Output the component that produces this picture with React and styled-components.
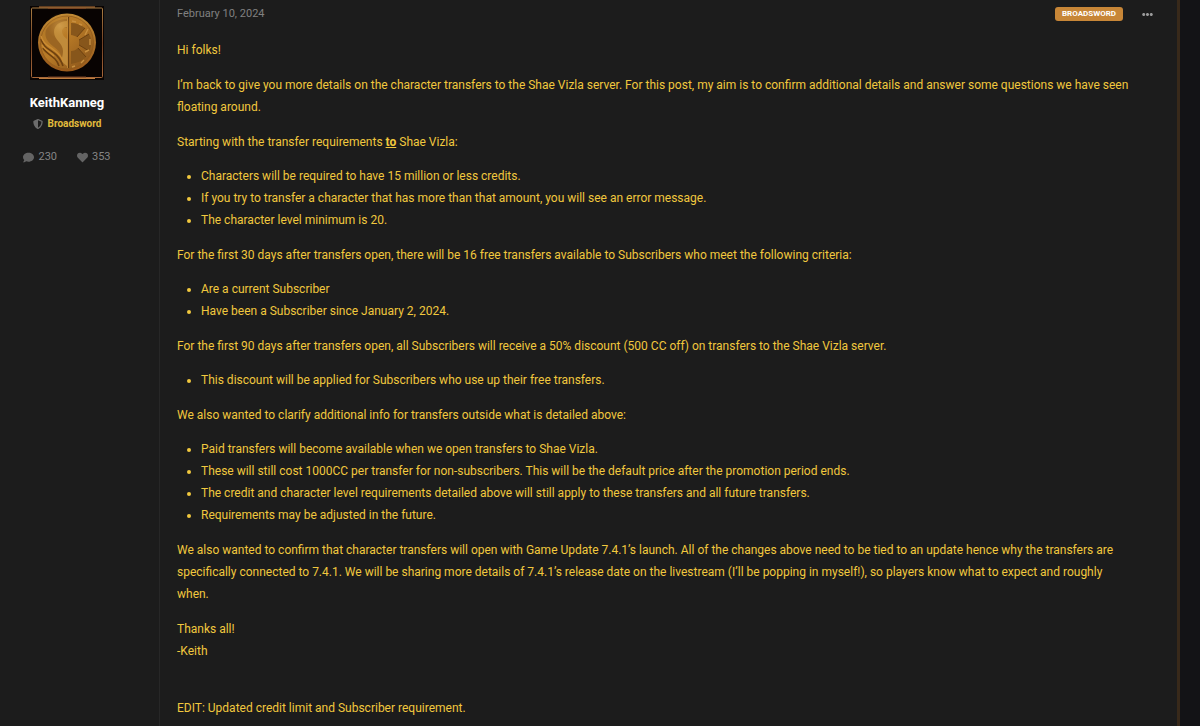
import React from "react";
import styled, { createGlobalStyle } from "styled-components";
import { FaComment, FaHeart, FaShieldAlt, FaEllipsisH } from "react-icons/fa";

const GlobalStyle = createGlobalStyle`
  *, *::before, *::after { box-sizing: border-box; }
  body {
    margin: 0;
    background: #131316;
    color: #f1c83e;
    font-family: Roboto, sans-serif;
    font-size: 12px;
    line-height: 22px;
  }
`;

const Post = styled.article`
  display: flex;
  min-height: 100vh;
  margin-right: 20px;
  background: #1c1c1c;
  border-right: 3px solid #38291a;
`;

const Author = styled.aside`
  flex: 0 0 160px;
  display: flex;
  flex-direction: column;
  align-items: center;
  padding: 6px 25px 0 0;
  border-right: 1px solid #272727;
`;

const AvatarLink = styled.a`
  display: block;
  height: 74px;
  margin-bottom: 12px;
`;

const AuthorName = styled.a`
  color: #ffffff;
  font-weight: 700;
  font-size: 13px;
  text-decoration: none;
`;

const Group = styled.div`
  display: flex;
  align-items: center;
  gap: 5px;
  height: 20px;
  color: #e2bb3c;
  font-size: 10px;
  font-weight: 700;
  svg { color: #6c6c6c; }
`;

const Stats = styled.ul`
  display: flex;
  gap: 20px;
  margin: 12px 0 0;
  padding: 0;
  list-style: none;
  color: #858585;
  font-size: 11px;
`;

const Stat = styled.li`
  display: flex;
  align-items: center;
  gap: 4px;
  svg { color: #646464; }
`;

const Main = styled.div`
  flex: 1;
  min-width: 0;
  padding: 3px 24px 0 17px;
`;

const Header = styled.header`
  display: flex;
  align-items: center;
  height: 22px;
`;

const PostDate = styled.a`
  margin-right: auto;
  color: #808080;
  font-size: 11px;
  text-decoration: none;
`;

const Badge = styled.strong`
  padding: 0 7px;
  border-radius: 3px;
  background: #c78637;
  color: #fff;
  font-size: 8px;
  line-height: 14px;
`;

const MenuButton = styled.button`
  display: flex;
  margin-left: 19px;
  padding: 0;
  border: 0;
  background: none;
  color: #9a9a9a;
`;

const Body = styled.div`
  padding: 1px 18px 8px 0;
  p { margin: 13px 0 0; }
  ul { margin: 12px 0 0; padding-left: 24px; }
`;

const EditNote = styled.p`
  padding-top: 22px;
`;

function Avatar() {
  return (
    <svg width="74" height="74" viewBox="0 0 74 74" role="img" aria-label="KeithKanneg">
      <defs>
        <linearGradient id="coin" x1="0" y1="0" x2="1" y2="1">
          <stop offset="0" stopColor="#b07827" />
          <stop offset=".45" stopColor="#b87a26" />
          <stop offset="1" stopColor="#84501a" />
        </linearGradient>
        <linearGradient id="rim" x1="0" y1="0" x2="0" y2="1">
          <stop offset="0" stopColor="#c08a35" />
          <stop offset="1" stopColor="#99591a" />
        </linearGradient>
        <linearGradient id="frame" x1="0" y1="0" x2="0" y2="1">
          <stop offset="0" stopColor="#a97c42" />
          <stop offset=".5" stopColor="#704023" />
          <stop offset="1" stopColor="#a8683a" />
        </linearGradient>
        <radialGradient id="glow">
          <stop offset="0" stopColor="#dcaa58" />
          <stop offset="1" stopColor="#c58b30" stopOpacity="0" />
        </radialGradient>
      </defs>
      <rect width="74" height="74" fill="#080302" />
      <rect x="1.5" y="2" width="71" height="69.5" rx="1" fill="none" stroke="url(#frame)" />
      <path d="M9 1h56M9 72.5h56" stroke="#bd7d3e" strokeWidth="1.2" />
      <path d="M18 2.5h38M18 71h38" stroke="#754322" />
      <circle cx="37" cy="36.5" r="29" fill="url(#rim)" />
      <circle cx="37" cy="36.5" r="26.5" fill="url(#coin)" stroke="#91591b" strokeWidth=".8" />
      <path d="M37 13c-9 0-17 4-21 11-2 6 1 12 8 17 4 3 7 6 8 11l5 6V47c-4-7-9-11-10-18 0-5 3-8 10-7Z" fill="#9b6522" />
      <path d="M37 15c-8 0-13 5-13 11 0 8 9 11 9 19 0 5-2 8-1 11l5 4V33c-3-2-5-5-5-8 0-2 2-4 5-4Z" fill="#c08b3a" />
      <path d="M11 33c2 8 8 10 13 14 4 3 7 7 9 13M13 42c3 5 8 7 12 11 2 2 3 4 4 7" fill="none" stroke="#6e400f" strokeWidth="1.6" />
      <path d="M11 30c2 8 8 10 13 14 4 3 7 6 9 11M12 39c3 5 8 7 12 11" fill="none" stroke="#cb8c34" strokeWidth="1.3" />
      <path d="M41 17c6 0 10 2 14 5l-8 9c-2-1-4-2-6-2ZM59 28c3 5 3 12 0 17l-10-6v-5ZM41 45c3 0 5-1 7-3l8 9c-4 4-9 6-15 7Z" fill="#87561b" />
      <path d="M49 34l10-6M49 39l10 6M47 31l8-9M48 42l8 9" stroke="#683d0e" strokeWidth=".9" />
      <path d="M42 15l4 1M49 18l3 1M58 23l-3 6M60 33v6M59 44l-4 2M54 54l-3 3M45 60l-3 1" fill="none" stroke="#c88f3f" strokeWidth="1.4" />
      <path d="M38.5 11v51" stroke="#653b0d" strokeWidth="1.2" />
      <path d="M37.5 11v51" stroke="#c48a38" strokeWidth=".8" />
      <circle cx="30" cy="20" r="13" fill="url(#glow)" opacity=".55" />
    </svg>
  );
}

export default function App() {
  return (
    <>
      <GlobalStyle />
      <Post>
        <Author>
          <AvatarLink href="#profile"><Avatar /></AvatarLink>
          <AuthorName href="#profile">KeithKanneg</AuthorName>
          <Group><FaShieldAlt size={10} />Broadsword</Group>
          <Stats>
            <Stat><FaComment size={11} />230</Stat>
            <Stat><FaHeart size={11} />353</Stat>
          </Stats>
        </Author>
        <Main>
          <Header>
            <PostDate href="#post"><time dateTime="2024-02-10">February 10, 2024</time></PostDate>
            <Badge>BROADSWORD</Badge>
            <MenuButton type="button" aria-label="More options"><FaEllipsisH size={11} /></MenuButton>
          </Header>
          <Body>
            <p>Hi folks!</p>
            <p>I’m back to give you more details on the character transfers to the Shae Vizla server. For this post, my aim is to confirm additional details and answer some questions we have seen floating around.</p>
            <p>Starting with the transfer requirements <strong><u>to</u></strong> Shae Vizla:</p>
            <ul>
              <li>Characters will be required to have 15 million or less credits.</li>
              <li>If you try to transfer a character that has more than that amount, you will see an error message.</li>
              <li>The character level minimum is 20.</li>
            </ul>
            <p>For the first 30 days after transfers open, there will be 16 free transfers available to Subscribers who meet the following criteria:</p>
            <ul>
              <li>Are a current Subscriber</li>
              <li>Have been a Subscriber since January 2, 2024.</li>
            </ul>
            <p>For the first 90 days after transfers open, all Subscribers will receive a 50% discount (500 CC off) on transfers to the Shae Vizla server.</p>
            <ul>
              <li>This discount will be applied for Subscribers who use up their free transfers.</li>
            </ul>
            <p>We also wanted to clarify additional info for transfers outside what is detailed above:</p>
            <ul>
              <li>Paid transfers will become available when we open transfers to Shae Vizla.</li>
              <li>These will still cost 1000CC per transfer for non-subscribers. This will be the default price after the promotion period ends.</li>
              <li>The credit and character level requirements detailed above will still apply to these transfers and all future transfers.</li>
              <li>Requirements may be adjusted in the future.</li>
            </ul>
            <p>We also wanted to confirm that character transfers will open with Game Update 7.4.1’s launch. All of the changes above need to be tied to an update hence why the transfers are specifically connected to 7.4.1. We will be sharing more details of 7.4.1’s release date on the livestream (I’ll be popping in myself!), so players know what to expect and roughly when.</p>
            <p>Thanks all!<br />-Keith</p>
            <EditNote>EDIT: Updated credit limit and Subscriber requirement.</EditNote>
          </Body>
        </Main>
      </Post>
    </>
  );
}
